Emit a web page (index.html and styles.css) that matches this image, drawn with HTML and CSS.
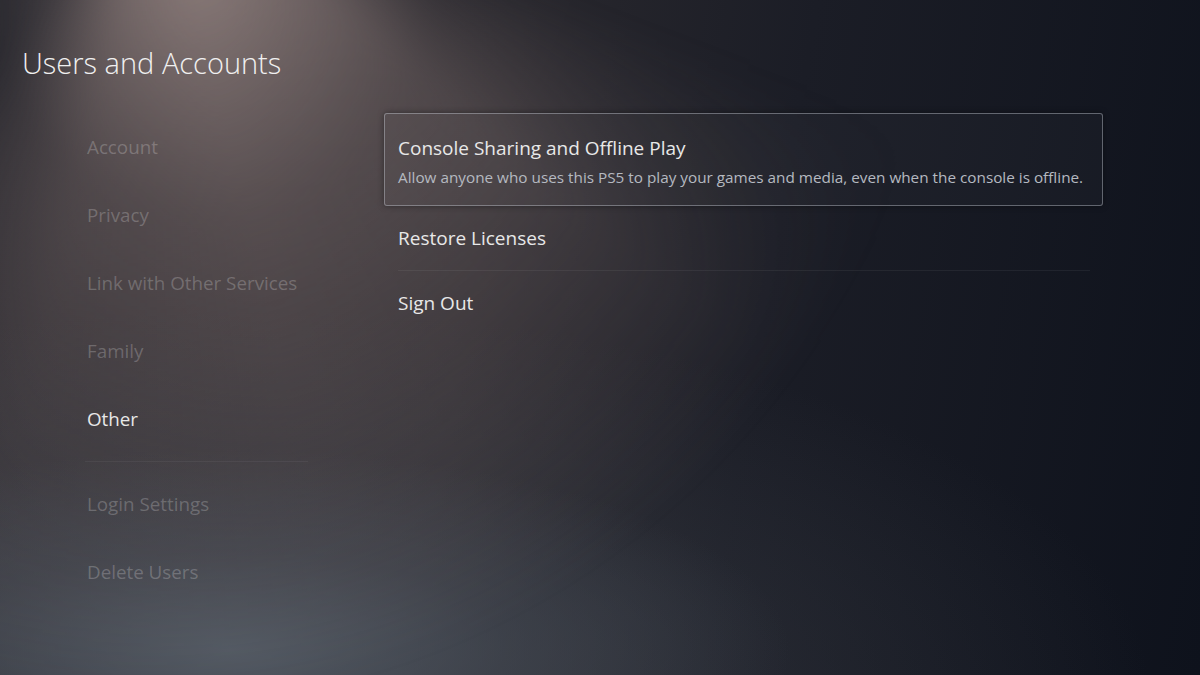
FILE: index.html
```html
<!DOCTYPE html>
<html lang="en">
<head>
    <meta charset="UTF-8">
    <meta name="viewport" content="width=device-width, initial-scale=1.0">
    <title>Users and Accounts</title>
    <link rel="stylesheet" href="styles.css">
</head>
<body>
    <main class="screen">
        <div class="spotlight" aria-hidden="true"></div>
        <h1 class="page-title">Users and Accounts</h1>
        <div class="layout">
            <nav class="side-menu" aria-label="Users and Accounts sections">
                <div class="menu-item">Account</div>
                <div class="menu-item">Privacy</div>
                <div class="menu-item">Link with Other Services</div>
                <div class="menu-item">Family</div>
                <div class="menu-item active">Other</div>
                <div class="menu-divider"></div>
                <div class="menu-item">Login Settings</div>
                <div class="menu-item">Delete Users</div>
            </nav>
            <section class="options">
                <div class="option focused" tabindex="0">
                    <div class="option-title">Console Sharing and Offline Play</div>
                    <div class="option-desc">Allow anyone who uses this PS5 to play your games and media, even when the console is offline.</div>
                </div>
                <div class="option" tabindex="0">
                    <div class="option-title">Restore Licenses</div>
                </div>
                <div class="option-divider"></div>
                <div class="option" tabindex="0">
                    <div class="option-title">Sign Out</div>
                </div>
            </section>
        </div>
    </main>
</body>
</html>
```

FILE: styles.css
```css
html, body {
    margin: 0;
    height: 100%;
}
body {
    font-family: 'Open Sans', 'Noto Sans', sans-serif;
    color: #e6e6e6;
    overflow: hidden;
    background:
        radial-gradient(ellipse 560px 200px at 230px 650px, rgba(84,92,102,0.9) 0%, rgba(72,78,88,0.5) 50%, rgba(60,64,72,0) 100%),
        radial-gradient(ellipse 900px 380px at 250px 690px, rgba(62,66,74,0.7) 0%, rgba(50,52,60,0) 100%),
        linear-gradient(100deg, #2b2a30 0%, #28272d 40%, #1b1d26 62%, #0e121c 100%);
}
.screen {
    position: relative;
    height: 675px;
    box-sizing: border-box;
    padding-top: 45px;
    overflow: hidden;
}
/* light cone falling from the top left */
.spotlight {
    position: absolute;
    inset: -40px;
    background:
        radial-gradient(ellipse 220px 230px at 250px 30px, rgba(180,160,155,0.55) 0%, rgba(180,160,155,0) 100%),
        conic-gradient(from 0deg at 190px -110px, rgba(145,126,123,0) 0deg 110deg, rgba(145,126,123,0.62) 130deg, rgba(145,126,123,0.72) 165deg, rgba(145,126,123,0.55) 192deg, rgba(145,126,123,0) 216deg, rgba(145,126,123,0) 360deg);
    -webkit-mask-image: radial-gradient(ellipse 820px 860px at 190px -110px, #000 0%, rgba(0,0,0,0.6) 45%, rgba(0,0,0,0) 100%);
    mask-image: radial-gradient(ellipse 820px 860px at 190px -110px, #000 0%, rgba(0,0,0,0.6) 45%, rgba(0,0,0,0) 100%);
    filter: blur(14px);
}
.page-title, .layout {
    position: relative;
}
.page-title {
    margin: 0 0 32px 22px;
    font-size: 29px;
    line-height: 36px;
    font-weight: 300;
    color: #f0f0f0;
}
.layout {
    display: grid;
    grid-template-columns: 384px 719px;
}
.side-menu {
    display: flex;
    flex-direction: column;
    padding-left: 87px;
}
.menu-item {
    height: 68px;
    display: flex;
    align-items: center;
    font-size: 18.8px;
    color: rgba(255,255,255,0.22);
}
.menu-item.active {
    color: #e8e8e8;
}
.menu-divider {
    height: 1px;
    width: 223px;
    margin: 8px 0 8px -2px;
    background: rgba(255,255,255,0.05);
}
.options {
    display: flex;
    flex-direction: column;
}
.option {
    height: 64px;
    padding: 0 14px;
    display: flex;
    flex-direction: column;
    justify-content: center;
    outline: none;
}
.option.focused {
    height: 93px;
    box-sizing: border-box;
    padding: 21px 13px 19px;
    justify-content: flex-start;
    border: 1.5px solid rgba(200,205,215,0.42);
    border-radius: 3px;
    background: rgba(255,255,255,0.025);
    box-shadow: 0 0 6px rgba(0,0,0,0.4);
}
.option-title {
    font-size: 19px;
    line-height: 26px;
    color: #e8e8e8;
}
.option-desc {
    margin-top: 6px;
    font-size: 15.3px;
    line-height: 20px;
    color: #b5b9c0;
}
.option-divider {
    height: 1px;
    margin: 0 13px 0 14px;
    background: rgba(255,255,255,0.06);
}
```
